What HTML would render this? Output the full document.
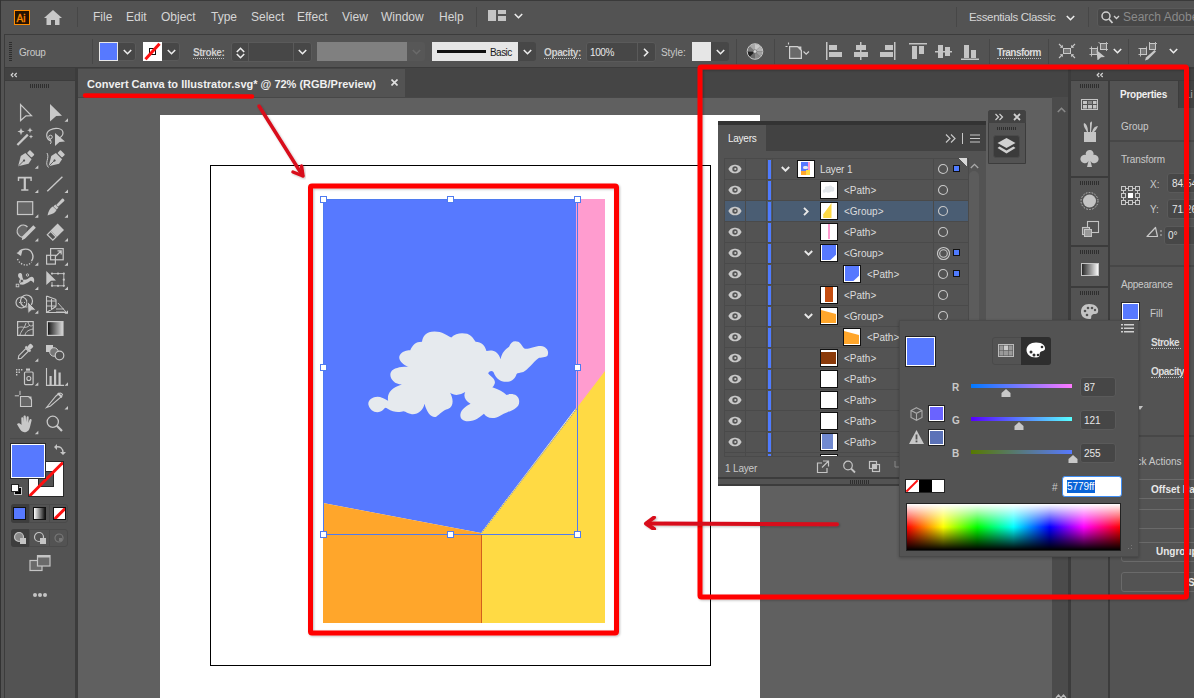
<!DOCTYPE html>
<html><head><meta charset="utf-8">
<style>
*{box-sizing:border-box}
html,body{margin:0;padding:0}
body{width:1194px;height:698px;position:relative;overflow:hidden;background:#535353;font-family:"Liberation Sans",sans-serif;color:#d6d6d6;font-size:12px}
.a{position:absolute}
.t{position:absolute;white-space:nowrap;line-height:1}
.sep{position:absolute;width:1px;background:#444}
.chev{position:absolute;width:6px;height:6px;border-right:2px solid #ececec;border-bottom:2px solid #ececec;transform:rotate(45deg)}
</style></head><body>

<!-- ============ MENU BAR ============ -->
<div class="a" style="left:0;top:0;width:1194px;height:34px;background:#535353"></div>
<div class="a" style="left:0;top:0;width:1194px;height:1px;background:#3a3a3a"></div>
<div class="a" style="left:14px;top:10px;width:16px;height:15px;background:#261300;border:1px solid #ff8c00"></div>
<div class="t" style="left:16.5px;top:13.5px;font-size:10px;color:#ff8c00;-webkit-text-stroke:0.3px #ff8c00">Ai</div>
<svg class="a" style="left:44px;top:10px" width="18" height="15" viewBox="0 0 18 15"><path d="M9 0 L18 8 L15.5 8 L15.5 15 L11 15 L11 10 L7 10 L7 15 L2.5 15 L2.5 8 L0 8 Z" fill="#c8c8c8"/></svg>
<div class="sep" style="left:77px;top:7px;height:20px;background:#474747"></div>
<div class="t" style="left:93px;top:11px">File</div>
<div class="t" style="left:126px;top:11px">Edit</div>
<div class="t" style="left:161px;top:11px">Object</div>
<div class="t" style="left:211px;top:11px">Type</div>
<div class="t" style="left:251px;top:11px">Select</div>
<div class="t" style="left:297px;top:11px">Effect</div>
<div class="t" style="left:342px;top:11px">View</div>
<div class="t" style="left:381px;top:11px">Window</div>
<div class="t" style="left:439px;top:11px">Help</div>


<div class="a" style="left:940px;top:0;width:1px;height:1px"></div>
<div class="sep" style="left:476px;top:7px;height:20px;background:#474747"></div>
<svg class="a" style="left:488px;top:10px" width="18" height="11" viewBox="0 0 18 11"><rect x="0" y="0" width="8" height="11" fill="#c4c4c4"/><rect x="10" y="0" width="8" height="4" fill="#c4c4c4"/><rect x="10" y="6" width="8" height="5" fill="#c4c4c4"/></svg>
<svg class="a" style="left:513.5px;top:13.0px" width="9" height="6" viewBox="0 0 9 6"><path d="M0.8 1 L4.5 4.7 L8.2 1" fill="none" stroke="#ececec" stroke-width="1.6"/></svg>
<div class="sep" style="left:956px;top:7px;height:20px;background:#474747"></div>
<div class="t" style="left:969px;top:12px;font-size:11.5px;letter-spacing:-0.35px">Essentials Classic</div>
<svg class="a" style="left:1065.5px;top:15.0px" width="9" height="6" viewBox="0 0 9 6"><path d="M0.8 1 L4.5 4.7 L8.2 1" fill="none" stroke="#ececec" stroke-width="1.6"/></svg>
<div class="sep" style="left:1088px;top:7px;height:20px;background:#474747"></div>
<div class="a" style="left:1097px;top:8px;width:110px;height:19px;background:#474747;border:1px solid #5a5a5a;border-radius:3px"></div>
<svg class="a" style="left:1101px;top:11px" width="20" height="13" viewBox="0 0 20 13"><circle cx="5" cy="5" r="4" fill="none" stroke="#d0d0d0" stroke-width="1.5"/><path d="M8 8 L11.5 12" stroke="#d0d0d0" stroke-width="1.8"/><path d="M13 5 L15.5 7.5 L18 5" fill="none" stroke="#d0d0d0" stroke-width="1.3"/></svg>
<div class="t" style="left:1123px;top:11px;color:#8a8a8a;font-size:12px">Search Adobe</div>

<!-- ============ CONTROL BAR ============ -->
<div class="a" style="left:4px;top:34px;width:1190px;height:34px;background:#3c3c3c"></div>
<div class="a" style="left:5px;top:35px;width:1189px;height:32px;background:#535353"></div>
<div class="a" style="left:9px;top:42px;width:3px;height:19px;background:repeating-linear-gradient(#2e2e2e 0 1px,transparent 1px 2px)"></div>
<div class="t" style="left:19px;top:47.5px;font-size:10px;font-weight:normal;color:#c9c9c9;letter-spacing:-0.22px">Group</div>
<div class="sep" style="left:92px;top:39px;height:25px;background:#474747"></div>
<!-- fill -->
<div class="a" style="left:99px;top:42px;width:37px;height:19px;background:#474747;border:1px solid #5a5a5a;border-radius:3px"></div>
<div class="a" style="left:99px;top:42px;width:19px;height:19px;background:#5779ff;border:1px solid #e8e8e8"></div>
<svg class="a" style="left:122.5px;top:49.0px" width="9" height="6" viewBox="0 0 9 6"><path d="M0.8 1 L4.5 4.7 L8.2 1" fill="none" stroke="#ececec" stroke-width="1.6"/></svg>
<!-- stroke none -->
<div class="a" style="left:143px;top:42px;width:37px;height:19px;background:#474747;border:1px solid #5a5a5a;border-radius:3px"></div>
<div class="a" style="left:143px;top:42px;width:19px;height:19px;background:#fff;overflow:hidden"><div class="a" style="left:6px;top:6px;width:7px;height:7px;border:1.3px solid #111"></div><div class="a" style="left:-1px;top:8px;width:21px;height:3px;background:#ff1010;transform:rotate(-48deg)"></div></div>
<svg class="a" style="left:166.5px;top:49.0px" width="9" height="6" viewBox="0 0 9 6"><path d="M0.8 1 L4.5 4.7 L8.2 1" fill="none" stroke="#ececec" stroke-width="1.6"/></svg>
<div class="t" style="left:193px;top:47.5px;font-size:10px;font-weight:bold;color:#cfcfcf;letter-spacing:-0.44px">Stroke:</div>
<div class="a" style="left:193px;top:58px;width:31px;height:1px;border-bottom:1px dotted #bbb"></div>
<div class="a" style="left:231px;top:42px;width:81px;height:20px;background:#474747;border:1px solid #5a5a5a;border-radius:3px"></div>
<div class="a" style="left:248px;top:43px;width:1px;height:18px;background:#5a5a5a"></div>
<div class="a" style="left:293px;top:43px;width:1px;height:18px;background:#5a5a5a"></div>
<svg class="a" style="left:235.5px;top:47.0px" width="9" height="6" viewBox="0 0 9 6"><path d="M0.8 5 L4.5 1.3 L8.2 5" fill="none" stroke="#ececec" stroke-width="1.6"/></svg>
<svg class="a" style="left:235.5px;top:53.0px" width="9" height="6" viewBox="0 0 9 6"><path d="M0.8 1 L4.5 4.7 L8.2 1" fill="none" stroke="#ececec" stroke-width="1.6"/></svg>
<svg class="a" style="left:297.5px;top:49.0px" width="9" height="6" viewBox="0 0 9 6"><path d="M0.8 1 L4.5 4.7 L8.2 1" fill="none" stroke="#ececec" stroke-width="1.6"/></svg>
<div class="a" style="left:317px;top:42px;width:90px;height:19px;background:#808080"></div>
<div class="a" style="left:407px;top:42px;width:18px;height:19px;background:#575757;border-radius:0 3px 3px 0"></div>
<svg class="a" style="left:411.5px;top:49.0px" width="9" height="6" viewBox="0 0 9 6"><path d="M0.8 1 L4.5 4.7 L8.2 1" fill="none" stroke="#6a6a6a" stroke-width="1.6"/></svg>
<!-- basic -->
<div class="a" style="left:432px;top:42px;width:104px;height:19px;background:#474747;border-radius:3px"></div>
<div class="a" style="left:432px;top:42px;width:86px;height:19px;background:#e6e6e6"></div>
<div class="a" style="left:437px;top:50px;width:49px;height:3px;background:#111"></div>
<div class="t" style="left:490px;top:47.5px;font-size:10px;font-weight:normal;color:#1a1a1a;letter-spacing:-0.55px">Basic</div>
<svg class="a" style="left:522.5px;top:49.0px" width="9" height="6" viewBox="0 0 9 6"><path d="M0.8 1 L4.5 4.7 L8.2 1" fill="none" stroke="#ececec" stroke-width="1.6"/></svg>
<div class="t" style="left:544px;top:47.5px;font-size:10px;font-weight:bold;color:#cfcfcf;letter-spacing:-0.38px">Opacity:</div>
<div class="a" style="left:544px;top:58px;width:37px;height:1px;border-bottom:1px dotted #bbb"></div>
<div class="a" style="left:586px;top:42px;width:70px;height:20px;background:#474747;border:1px solid #5a5a5a;border-radius:3px"></div>
<div class="a" style="left:637px;top:43px;width:1px;height:18px;background:#5a5a5a"></div>
<div class="t" style="left:590px;top:47.5px;font-size:10px;font-weight:normal;color:#e8e8e8;letter-spacing:-0.39px">100%</div>
<svg class="a" style="left:642.5px;top:47.5px" width="6" height="9" viewBox="0 0 6 9"><path d="M1 0.8 L4.7 4.5 L1 8.2" fill="none" stroke="#ececec" stroke-width="1.6"/></svg>
<div class="t" style="left:661px;top:47.5px;font-size:10px;font-weight:normal;color:#c9c9c9;letter-spacing:-0.07px">Style:</div>
<div class="a" style="left:692px;top:42px;width:37px;height:19px;background:#474747;border-radius:3px"></div>
<div class="a" style="left:692px;top:42px;width:19px;height:19px;background:#e6e6e6"></div>
<svg class="a" style="left:715.5px;top:49.0px" width="9" height="6" viewBox="0 0 9 6"><path d="M0.8 1 L4.5 4.7 L8.2 1" fill="none" stroke="#ececec" stroke-width="1.6"/></svg>
<div class="sep" style="left:736px;top:39px;height:25px;background:#474747"></div>
<svg class="a" style="left:746px;top:43px" width="18" height="17" viewBox="0 0 18 17"><g transform="translate(9 8.5)">
<path d="M0 0 L0 -7.5 A7.5 7.5 0 0 1 5.3 -5.3Z" fill="#c8c8c8"/><path d="M0 0 L5.3 -5.3 A7.5 7.5 0 0 1 7.5 0Z" fill="#b4b4b4"/><path d="M0 0 L7.5 0 A7.5 7.5 0 0 1 5.3 5.3Z" fill="#a0a0a0"/><path d="M0 0 L5.3 5.3 A7.5 7.5 0 0 1 0 7.5Z" fill="#8a8a8a"/><path d="M0 0 L0 7.5 A7.5 7.5 0 0 1 -5.3 5.3Z" fill="#6a6a6a"/><path d="M0 0 L-5.3 5.3 A7.5 7.5 0 0 1 -7.5 0Z" fill="#222"/><path d="M0 0 L-7.5 0 A7.5 7.5 0 0 1 -5.3 -5.3Z" fill="#7a7a7a"/><path d="M0 0 L-5.3 -5.3 A7.5 7.5 0 0 1 0 -7.5Z" fill="#a8a8a8"/>
<circle r="7.8" fill="none" stroke="#c8c8c8" stroke-width="1"/><circle r="1.8" fill="#d8d8d8" stroke="#666" stroke-width="0.6"/></g></svg>
<div class="sep" style="left:774px;top:39px;height:25px;background:#474747"></div>
<svg class="a" style="left:785px;top:42px" width="27" height="18" viewBox="0 0 27 18"><path d="M4.6 4.6 H12.5 L16.4 8.5 V16.4 H4.6 Z" fill="#6a6a6a" stroke="#d0d0d0" stroke-width="1.2"/><path d="M12.5 4.6 L16.4 4.6 V8.5Z" fill="#d0d0d0"/><path d="M0.5 4.5 H2.6 M3.5 0.5 V2.6" stroke="#d0d0d0" stroke-width="1.1"/><path d="M18.5 9.5 L21.2 12.2 L23.9 9.5" fill="none" stroke="#d0d0d0" stroke-width="1.2"/></svg>
<svg class="a" style="left:826px;top:42px" width="70" height="18" viewBox="0 0 70 18"><g fill="#c4c4c4"><rect x="0" y="0" width="1.5" height="18"/><rect x="3" y="3" width="8" height="5"/><rect x="3" y="10" width="13" height="5"/>
<rect x="34" y="0" width="1.5" height="18"/><rect x="30" y="3" width="10" height="5"/><rect x="28" y="10" width="14" height="5"/>
<rect x="68" y="0" width="1.5" height="18"/><rect x="59" y="3" width="8" height="5"/><rect x="54" y="10" width="13" height="5"/></g></svg>
<svg class="a" style="left:909px;top:43px" width="72" height="17" viewBox="0 0 72 17"><g fill="#c4c4c4"><rect x="0" y="0" width="18" height="1.5"/><rect x="3" y="3" width="5" height="13"/><rect x="10" y="3" width="5" height="8"/>
<rect x="26" y="8" width="17" height="1.5"/><rect x="29" y="2" width="5" height="13"/><rect x="36" y="4" width="5" height="9"/>
<rect x="52" y="15.5" width="18" height="1.5"/><rect x="55" y="2" width="5" height="13"/><rect x="62" y="7" width="5" height="8"/></g></svg>
<div class="sep" style="left:989px;top:39px;height:25px;background:#474747"></div>
<div class="t" style="left:997px;top:47.5px;font-size:10px;font-weight:bold;color:#dcdcdc;letter-spacing:-0.55px">Transform</div>
<div class="a" style="left:997px;top:58px;width:44px;height:1px;border-bottom:1px dotted #bbb"></div>
<div class="sep" style="left:1048px;top:39px;height:25px;background:#474747"></div>
<svg class="a" style="left:1058px;top:43px" width="18" height="16" viewBox="0 0 18 16"><rect x="5.5" y="5.5" width="7" height="5" fill="#777" stroke="#c8c8c8" stroke-width="1"/><g stroke="#c8c8c8" stroke-width="1.1" fill="none"><path d="M1 1 L4.5 4.5 M17 1 L13.5 4.5 M1 15 L4.5 11.5 M17 15 L13.5 11.5"/></g><g fill="#c8c8c8"><path d="M4.8 4.8 L1.8 4.8 L4.8 1.8Z M13.2 4.8 L16.2 4.8 L13.2 1.8Z M4.8 11.2 L1.8 11.2 L4.8 14.2Z M13.2 11.2 L16.2 11.2 L13.2 14.2Z"/></g></svg>
<svg class="a" style="left:1089px;top:42px" width="20" height="18" viewBox="0 0 20 18"><g fill="#777" stroke="#c8c8c8" stroke-width="1"><rect x="2.5" y="6.5" width="6" height="6"/><rect x="11.5" y="1.5" width="6" height="6"/></g><g stroke="#c8c8c8" stroke-width="0.9"><path d="M0.5 6.5 H2.5 M2.5 4.5 V6.5 M0.5 12.5 H2.5 M2.5 12.5 V14.5 M8.5 4.5 V6.5 M9.5 0.5 L11.5 1.5 M17.5 0 V1.5 H19 M17.5 7.5 H19 M17.5 7.5 V9"/></g><path d="M7.5 8 L16 15 L12 15.2 L8.5 18.5 Z" fill="#c8c8c8"/></svg>
<svg class="a" style="left:1112.5px;top:48.0px" width="9" height="6" viewBox="0 0 9 6"><path d="M0.8 1 L4.5 4.7 L8.2 1" fill="none" stroke="#ececec" stroke-width="1.6"/></svg>
<div class="sep" style="left:1128px;top:39px;height:25px;background:#474747"></div>
<svg class="a" style="left:1138px;top:42px" width="20" height="20" viewBox="0 0 20 20"><g fill="#777" stroke="#c8c8c8" stroke-width="1"><rect x="2.5" y="6.5" width="6" height="6"/><rect x="11.5" y="1.5" width="6" height="6"/></g><g stroke="#c8c8c8" stroke-width="0.9"><path d="M0.5 6.5 H2.5 M0.5 12.5 H2.5 M2.5 12.5 V14.5 M8.5 4.5 V6.5 M11.5 0 V1.5 M17.5 0 V1.5 H19"/></g><path d="M16.5 8 L18 9.5 L10 17.5 L7 18.5 L8 15.5 Z" fill="#c8c8c8"/></svg>
<svg class="a" style="left:1168.5px;top:48.0px" width="9" height="6" viewBox="0 0 9 6"><path d="M0.8 1 L4.5 4.7 L8.2 1" fill="none" stroke="#ececec" stroke-width="1.6"/></svg>


<!-- ============ LEFT WINDOW EDGE / TOOLBAR ============ -->
<div class="a" style="left:4px;top:68px;width:74px;height:630px;background:#3c3c3c"></div>
<div class="a" style="left:0;top:0;width:1px;height:698px;background:#333"></div>
<div class="a" style="left:5px;top:68px;width:70px;height:12px;background:#424242"></div>
<div class="a" style="left:5px;top:81px;width:70px;height:617px;background:#535353"></div>
<svg class="a" style="left:10px;top:72px" width="8" height="6" viewBox="0 0 8 6"><path d="M3.2 1 L1.2 3 L3.2 5 M6.7 1 L4.7 3 L6.7 5" fill="none" stroke="#d8d8d8" stroke-width="1.2"/></svg>
<div class="a" style="left:30px;top:84px;width:20px;height:4px;background:repeating-linear-gradient(90deg,#2e2e2e 0 1px,transparent 1px 2px)"></div>
<svg class="a" style="left:0;top:90px" width="78" height="360" viewBox="0 90 78 360">
<g fill="#c8c8c8" stroke="none">
 <!-- selection -->
 <path d="M20.6 104.6 L31.4 115.6 L26 115.8 L20.6 120.6 Z" fill="none" stroke="#c8c8c8" stroke-width="1.3" stroke-linejoin="miter"/>
 <path d="M50 104 L62 115.8 L56.2 116 L50 121.5 Z"/>
 <path d="M64.5 121.7 L68.0 118.2 V121.7Z"/>
 <!-- wand -->
 <path d="M16.6 144.2 L27 133.8 L28.6 135.4 L18.2 145.8 Z"/>
 <path d="M21 128 l1 2.6 l2.6 1 l-2.6 1 l-1 2.6 l-1 -2.6 l-2.6 -1 l2.6 -1z"/>
 <path d="M30 127.5 l0.8 2 l2 0.8 l-2 0.8 l-0.8 2 l-0.8 -2 l-2 -0.8 l2 -0.8z"/>
 <path d="M31 134.5 l0.6 1.5 l1.5 0.6 l-1.5 0.6 l-0.6 1.5 l-0.6 -1.5 l-1.5 -0.6 l1.5 -0.6z"/>
 <!-- lasso -->
 <path d="M51 141 C46 139 45 133 50 130 C55 127 63 128 63 133 C63 136 60 138 58 138" fill="none" stroke="#c8c8c8" stroke-width="1.2"/>
 <circle cx="50.5" cy="137" r="1.8" fill="none" stroke="#c8c8c8" stroke-width="1"/>
 <path d="M50 139 C51 141 52 143 50 144" fill="none" stroke="#c8c8c8" stroke-width="1"/>
 <path d="M55 133 L65 141.5 L59.5 142 L55 146 Z"/>
 <!-- pen -->
 <g transform="translate(25 159.5) rotate(45) scale(1.02)">
  <rect x="-3.2" y="-10" width="6.4" height="4.2" rx="0.8"/>
  <path d="M-4.3 -4.8 H4.3 L5.4 0.5 L0 9.5 L-5.4 0.5 Z"/>
  <circle cx="0" cy="1.3" r="1.1" fill="#535353"/><path d="M0 2 V9" stroke="#535353" stroke-width="0.8"/>
 </g>
 <path d="M34.8 168.8 L38.3 165.3 V168.8Z"/>
 <g transform="translate(55.5 159.5) rotate(45) scale(1.02)">
  <rect x="-3.2" y="-10" width="6.4" height="4.2" rx="0.8"/>
  <path d="M-4.3 -4.8 H4.3 L5.4 0.5 L0 9.5 L-5.4 0.5 Z"/>
  <circle cx="0" cy="1.3" r="1.1" fill="#535353"/><path d="M0 2 V9" stroke="#535353" stroke-width="0.8"/>
 </g>
 <path d="M48.5 167.5 C44 163 50 158 47 153" fill="none" stroke="#c8c8c8" stroke-width="1"/>
 <!-- type -->
 <path d="M17.8 176.8 H31.8 V181 H30.4 V178.6 H25.9 V189.2 H28.4 V190.8 H21.2 V189.2 H23.7 V178.6 H19.2 V181 H17.8 Z"/>
 <path d="M34.8 193 L38.3 189.5 V193Z"/>
 <path d="M47.3 191.2 L62.4 176.8" stroke="#c8c8c8" stroke-width="1.4"/>
 <path d="M64.5 193 L68.0 189.5 V193Z"/>
 <!-- rect -->
 <rect x="17.5" y="201.7" width="15.2" height="12.8" fill="#666" stroke="#c8c8c8" stroke-width="1.2"/>
 <path d="M34.8 217.7 L38.3 214.2 V217.7Z"/>
 <g transform="translate(55 208) rotate(45)"><path d="M-1.6 -11.5 C-1.6 -12.8 1.6 -12.8 1.6 -11.5 L1.3 -3 H-1.3Z"/><rect x="-2.2" y="-2.6" width="4.4" height="2.6"/><path d="M-2.6 0.4 H2.6 C3.4 3 3 6 0 10.5 C-3 6 -3.4 3 -2.6 0.4Z"/></g>
 <path d="M64.5 217.7 L68.0 214.2 V217.7Z"/>
 <!-- shaper / eraser -->
 <path d="M26 236.5 A6 6 0 1 1 27.5 227" fill="#666" stroke="#c8c8c8" stroke-width="1.3"/>
 <path d="M21.8 240.2 L22.4 236.2 L33.3 225.3 L35.8 227.8 L24.9 238.7 Z"/>
 <path d="M34.8 241.6 L38.3 238.1 V241.6Z"/>
 <g transform="translate(55.5 232) rotate(45)">
  <rect x="-4.5" y="-7.5" width="9" height="10"/>
  <rect x="-3.9" y="3.1" width="7.8" height="4.6" fill="none" stroke="#c8c8c8" stroke-width="1.2"/>
 </g>
 <path d="M64.5 241.6 L68.0 238.1 V241.6Z"/>
 <!-- rotate / scale -->
 <path d="M19 252 C22 248 30 248 32 253 C33.5 256 33 259 31.5 261" fill="none" stroke="#c8c8c8" stroke-width="1.4"/>
 <path d="M16.5 253 L22.5 250 L21 256Z"/>
 <path d="M17.5 259 C19 263 23 265 26 265 C28 265 30 264 31.5 262" fill="none" stroke="#c8c8c8" stroke-width="1.3" stroke-dasharray="1.3 1.5"/>
 <path d="M34.8 265.8 L38.3 262.3 V265.8Z"/>
 <rect x="46.6" y="255.3" width="8.8" height="8.8" fill="none" stroke="#c8c8c8" stroke-width="1.2"/>
 <rect x="50.6" y="248.6" width="12.6" height="11.2" fill="none" stroke="#c8c8c8" stroke-width="1.2"/>
 <path d="M56 256 L61 251 M57.5 250.8 H61.2 V254.5" fill="none" stroke="#c8c8c8" stroke-width="1.2"/>
 <path d="M64.5 265.8 L68.0 262.3 V265.8Z"/>
 <!-- warp / free transform -->
 <path d="M18.2 276.5 C17.5 273.5 19.5 272.5 21.2 273.2 C22.8 274.2 21.8 276.8 23 278.8 C24.8 281 28 278.8 30 277.2 C32.2 275.8 34.2 277.2 34.2 280 C34.2 281.8 33.6 283 33.4 283 C32.6 281.4 31.4 280.2 29.8 281.2 C27.2 283 24.2 285 21 284.6 C18.8 284.2 18.8 281.4 19.8 279.4 C20.2 278.2 18.4 277.6 18.2 276.5Z"/>
 <path d="M17.5 285.5 L27.3 275.2" stroke="#535353" stroke-width="0.9"/>
 <circle cx="21.8" cy="281" r="1.7" fill="#535353" stroke="#c8c8c8" stroke-width="0.8"/>
 <rect x="16.2" y="284.2" width="2.6" height="2.6" fill="#535353" stroke="#c8c8c8" stroke-width="0.9"/>
 <circle cx="27.5" cy="275" r="1.2" fill="#535353" stroke="#c8c8c8" stroke-width="0.9"/>
 <path d="M34.8 290 L38.3 286.5 V290Z"/>
 <path d="M46.3 271 L56 280.5 L51 280.7 L46.3 285Z"/>
 <path d="M52 273.6 H63.8 V285.8 H52 V282" fill="none" stroke="#c8c8c8" stroke-width="0.9"/>
 <g><circle cx="52" cy="273.6" r="1.1"/><circle cx="58" cy="273.6" r="1.1"/><circle cx="63.8" cy="273.6" r="1.1"/><circle cx="63.8" cy="279.7" r="1.1"/><circle cx="63.8" cy="285.8" r="1.1"/><circle cx="58" cy="285.8" r="1.1"/><circle cx="52" cy="285.8" r="1.1"/></g>
 <path d="M64.5 290 L68 286.5 V290Z"/>
 <!-- shape builder / perspective -->
 <circle cx="21.5" cy="302.5" r="5.5" fill="none" stroke="#c8c8c8" stroke-width="1.2"/>
 <circle cx="26.5" cy="301" r="6" fill="none" stroke="#c8c8c8" stroke-width="1.2"/>
 <path d="M19 302.5 h1 M21.5 302.5 h1 M24 302.5 h1" stroke="#c8c8c8" stroke-width="1.2"/>
 <path d="M27.5 301.5 L36 310 L31.5 310.3 L28 313.5Z" stroke="#535353" stroke-width="0.8"/>
 <path d="M34.8 313.8 L38.3 310.3 V313.8Z"/>
 <path d="M46.5 296 V312.5 H66 M46.5 296 L56 299.5 M46.5 312.5 L56 306.5 M51.5 297.8 V310 M56 299.5 V306.5 M46.5 301 H56 M46.5 306 H56" fill="none" stroke="#c8c8c8" stroke-width="1.1"/>
 <path d="M58 303 L66 312 H56" fill="none" stroke="#c8c8c8" stroke-width="0.9"/><path d="M56 309 H64" stroke="#c8c8c8" stroke-width="0.9"/>
 <path d="M64.5 313.8 L68.0 310.3 V313.8Z"/>
 <!-- mesh / gradient -->
 <rect x="17.6" y="321.6" width="15.6" height="13.8" fill="none" stroke="#c8c8c8" stroke-width="1.2"/>
 <path d="M18 328 C22 325 25 330 30 325 M20 335 C21 331 24 329 26 323 M25 335 C26 331 29 330 33 329 M28 322 C29 326 31 327 33 325" fill="none" stroke="#c8c8c8" stroke-width="0.9"/>
 <defs><linearGradient id="gtb" x1="0" x2="1"><stop offset="0" stop-color="#111"/><stop offset="1" stop-color="#ddd"/></linearGradient></defs>
 <rect x="47.4" y="321.6" width="15.6" height="13.8" fill="url(#gtb)" stroke="#c8c8c8" stroke-width="1.2"/>
 <!-- eyedropper / blend -->
 <g transform="translate(25 352) rotate(45)">
  <rect x="-2.2" y="-10" width="4.4" height="5" rx="1"/>
  <rect x="-3.5" y="-5.2" width="7" height="2"/>
  <path d="M-1.8 -3 H1.8 V7 L0 9.5 L-1.8 7Z" fill="none" stroke="#c8c8c8" stroke-width="1.1"/>
 </g>
 <path d="M34.8 361.8 L38.3 358.3 V361.8Z"/>
 <rect x="46" y="345" width="7" height="7"/>
 <circle cx="54" cy="352" r="4.3" fill="#777" stroke="#c8c8c8" stroke-width="1"/>
 <circle cx="59.5" cy="355.5" r="4.3" fill="#535353" stroke="#c8c8c8" stroke-width="1.2"/>
 <!-- symbol sprayer / graph -->
 <path d="M16 369 h1.4 v1.4 h-1.4z M18.5 369 h1.4 v1.4 h-1.4z M21 369 h1.4 v1.4 h-1.4z M16 371.5 h1.4 v1.4 h-1.4z M18.5 371.5 h1.4 v1.4 h-1.4z M16 374 h1.4 v1.4 h-1.4z"/>
 <rect x="26" y="368.5" width="4" height="2.2"/>
 <rect x="24.5" y="372" width="8.6" height="12.6" rx="1" fill="none" stroke="#c8c8c8" stroke-width="1.2"/>
 <circle cx="28.8" cy="378.5" r="2" fill="none" stroke="#c8c8c8" stroke-width="1.1"/>
 <path d="M34.8 385.8 L38.3 382.3 V385.8Z"/>
 <path d="M46.5 368 V385.4 H64" fill="none" stroke="#c8c8c8" stroke-width="1.1"/>
 <rect x="49.5" y="376" width="2.2" height="9"/><rect x="54" y="369.5" width="2.2" height="15.5"/><rect x="58.5" y="372.5" width="2.2" height="12.5"/>
 <path d="M64.5 385.8 L68.0 382.3 V385.8Z"/>
 <!-- artboard / slice -->
 <path d="M20.5 396.5 H28.5 L31.5 399.5 V406.5 H20.5 Z" fill="#666" stroke="#c8c8c8" stroke-width="1.1"/>
 <path d="M28.5 396.5 H31.5 V399.5Z"/>
 <path d="M14.8 395.8 H19 M20 390.8 V395" stroke="#c8c8c8" stroke-width="1"/>
 <path d="M46.5 407.5 L56 396 L59 393.5 C60 392.5 62 393.5 62.5 394.5 L61 397 L50.5 406 Z" fill="none" stroke="#c8c8c8" stroke-width="1.1"/>
 <path d="M58.5 392.5 L62.5 396.5 L61.5 398 L57 394Z"/>
 <path d="M64.5 409.5 L68.0 406.0 V409.5Z"/>
 <!-- hand / zoom -->
 <path d="M17 424.2 C18 422.5 20 423 21.5 425 L21.3 418.5 C21.2 416.8 23.2 416.8 23.3 418.3 L23.8 422 L23.5 416.6 C23.5 415 25.8 415 25.8 416.6 L26.2 422 L26.6 417.3 C26.8 415.8 28.8 416 28.7 417.6 L28.4 423 L29.5 419.8 C30 418.5 32 419 31.6 420.5 L30 427 C29 431 27 432.2 24.5 432.2 C22 432.2 20.5 430 19.5 428.5Z"/>
 <path d="M34.8 434.2 L38.3 430.7 V434.2Z"/>
 <circle cx="52.8" cy="421.8" r="5.6" fill="none" stroke="#c8c8c8" stroke-width="1.3"/>
 <path d="M56.8 425.8 L62 431" stroke="#c8c8c8" stroke-width="2.2"/>
</g>
</svg>
<div class="a" style="left:10px;top:438px;width:60px;height:1px;background:#4a4a4a"></div>
<!-- fill/stroke -->
<div class="a" style="left:28px;top:461px;width:36px;height:36px;background:#fff;border:1px solid #2a2a2a;overflow:hidden">
 <div class="a" style="left:9px;top:9px;width:16px;height:16px;background:#535353;border:1px solid #2a2a2a"></div>
 <div class="a" style="left:-7px;top:16px;width:48px;height:3px;background:#ff1010;transform:rotate(-45deg)"></div>
</div>
<div class="a" style="left:11px;top:444px;width:34px;height:34px;background:#5779ff;border:1px solid #fff;outline:1px solid #2a2a2a"></div>
<svg class="a" style="left:54px;top:443px" width="13" height="13" viewBox="0 0 13 13"><path d="M2 4 C6 3 9 5 9 10" fill="none" stroke="#c4c4c4" stroke-width="1.4"/><path d="M0 4 L3 1 L3 7Z M6 9 L12 9 L9 12Z" fill="#c4c4c4"/></svg>
<div class="a" style="left:14px;top:487px;width:8px;height:8px;background:#000;border:1px solid #c4c4c4"></div>
<div class="a" style="left:11px;top:484px;width:8px;height:8px;background:#fff;border:1px solid #222"></div>
<!-- mode buttons -->
<div class="a" style="left:11px;top:504px;width:57px;height:19px;border:1px solid #4a4a4a;border-radius:3px"></div>
<div class="a" style="left:11px;top:504px;width:18px;height:19px;background:#3d3d3d;border-radius:3px 0 0 3px"></div>
<div class="a" style="left:13px;top:507px;width:13px;height:13px;background:#5779ff;border:1px solid #111"></div>
<div class="a" style="left:29px;top:505px;width:1px;height:17px;background:#4a4a4a"></div><div class="a" style="left:49px;top:505px;width:1px;height:17px;background:#4a4a4a"></div><div class="a" style="left:29px;top:530px;width:1px;height:16px;background:#4a4a4a"></div><div class="a" style="left:49px;top:530px;width:1px;height:16px;background:#4a4a4a"></div>
<div class="a" style="left:33px;top:507px;width:13px;height:13px;background:linear-gradient(90deg,#fff,#111);border:1px solid #111"></div>
<div class="a" style="left:53px;top:507px;width:13px;height:13px;background:#fff;border:1px solid #111;overflow:hidden"><div class="a" style="left:-3px;top:4px;width:18px;height:2.5px;background:#ff1010;transform:rotate(-45deg)"></div></div>
<div class="a" style="left:11px;top:529px;width:57px;height:18px;border:1px solid #4a4a4a;border-radius:3px"></div>
<div class="a" style="left:11px;top:529px;width:18px;height:18px;background:#3d3d3d;border-radius:3px 0 0 3px"></div>
<svg class="a" style="left:13px;top:531px" width="55" height="15" viewBox="0 0 55 15"><circle cx="6" cy="6" r="4.5" fill="#888" stroke="#c4c4c4" stroke-width="1.2"/><rect x="7" y="7" width="6" height="6" fill="#c4c4c4"/><circle cx="26" cy="6" r="4.5" fill="none" stroke="#c4c4c4" stroke-width="1.2"/><rect x="27" y="7" width="6" height="6" fill="#c4c4c4"/><circle cx="46" cy="7" r="4" fill="none" stroke="#777" stroke-width="1.2"/><path d="M46 7 h3 v3 h-3z" fill="#777"/></svg>
<svg class="a" style="left:29px;top:555px" width="22" height="17" viewBox="0 0 22 17"><rect x="1" y="5.5" width="12" height="10" fill="#6a6a6a" stroke="#c4c4c4" stroke-width="1.2"/><rect x="8.5" y="0.5" width="12.5" height="10.5" fill="#6a6a6a" stroke="#c4c4c4" stroke-width="1.2"/><rect x="8.5" y="0.5" width="12.5" height="2" fill="#c4c4c4"/></svg>
<div class="a" style="left:33px;top:593px;width:4px;height:4px;border-radius:2px;background:#c4c4c4"></div>
<div class="a" style="left:38px;top:593px;width:4px;height:4px;border-radius:2px;background:#c4c4c4"></div>
<div class="a" style="left:43px;top:593px;width:4px;height:4px;border-radius:2px;background:#c4c4c4"></div>

<!-- ============ TAB STRIP & CANVAS ============ -->
<div class="a" style="left:78px;top:68px;width:992px;height:30px;background:#454545"></div>
<div class="a" style="left:78px;top:69px;width:327px;height:28px;background:#535353"></div>
<div class="t" style="left:87px;top:79px;font-size:11px;font-weight:bold;color:#f0f0f0">Convert Canva to Illustrator.svg* @ 72% (RGB/Preview)</div>
<svg class="a" style="left:391px;top:79px" width="7" height="7" viewBox="0 0 7 7"><path d="M0.5 0.5 L6.5 6.5 M6.5 0.5 L0.5 6.5" stroke="#e0e0e0" stroke-width="1.6"/></svg>
<div class="a" style="left:78px;top:97px;width:974px;height:601px;background:#606060"></div>
<div class="a" style="left:1052px;top:97px;width:16px;height:601px;background:#4b4b4b"></div>
<div class="a" style="left:78px;top:97px;width:974px;height:1px;background:#474747"></div>
<svg class="a" style="left:1057.0px;top:106.5px" width="9" height="6" viewBox="0 0 9 6"><path d="M0.8 5 L4.5 1.3 L8.2 5" fill="none" stroke="#8a8a8a" stroke-width="1.6"/></svg>
<div class="a" style="left:1068px;top:68px;width:3px;height:630px;background:#3c3c3c"></div>


<!-- ============ ARTBOARD ============ -->
<div class="a" style="left:160px;top:115px;width:600px;height:583px;background:#fff"></div>
<div class="a" style="left:210px;top:165px;width:501px;height:501px;border:1px solid #000"></div>
<svg class="a" style="left:0;top:0" width="1194" height="698" viewBox="0 0 1194 698">
 <rect x="575" y="199" width="30" height="215" fill="#ff9ccf"/>
 <path d="M323 199 H576 V408 L481 533 L323 503 Z" fill="#5779ff"/>
 <path d="M605 371 L481 533 L481 623 L605 623 Z" fill="#ffda44"/>
 <path d="M323 503 L481 533 L481 623 L323 623 Z" fill="#ffa62b"/>
 <path d="M481.5 534 V623" stroke="#d2601c" stroke-width="1"/>
 <g transform="translate(360 320) scale(0.1675)">
 <path fill="#e6eaee" d="M50 505 C45 470 95 445 135 465 C150 472 160 478 168 482 C160 440 185 405 250 385 C200 385 170 340 185 310 C200 285 250 278 290 280 C240 260 220 225 245 200 C262 182 290 180 300 180 C315 150 330 130 370 130 C375 95 395 68 445 68 C490 68 520 90 545 105 C570 78 605 75 640 82 C665 90 680 115 690 130 C725 132 745 150 755 185 C790 175 825 185 840 235 C845 195 870 175 890 160 C900 130 920 120 945 130 C965 140 970 165 985 172 C1010 175 1040 155 1080 155 C1115 160 1130 185 1120 212 C1110 225 1080 222 1065 228 C1030 255 1000 300 975 310 C955 315 940 315 935 322 C925 355 895 375 860 368 C825 362 810 340 800 318 C795 300 775 298 765 318 C780 340 810 350 805 378 C800 392 795 398 790 402 C830 415 855 430 875 448 C905 435 945 445 950 480 C955 520 920 535 880 550 C850 560 825 585 790 585 C765 585 750 575 740 560 C715 580 690 605 645 605 C610 605 595 585 600 560 C605 535 630 515 660 500 C630 480 615 460 628 430 C610 440 585 452 560 445 C550 442 545 440 538 435 C555 465 565 515 525 532 C495 540 480 560 455 578 C425 585 400 555 385 500 C378 540 345 565 310 562 C285 560 275 548 260 545 C240 550 200 555 165 530 C150 520 150 525 140 535 C110 565 60 550 50 505 Z"/>
 </g>
 <!-- selection bbox -->
 <rect x="323.5" y="199.5" width="254" height="335" fill="none" stroke="#4f7bf0" stroke-width="1"/>
 <path d="M481.5 533 L577 408.5" stroke="#4f7bf0" stroke-width="0.9" stroke-dasharray="1.5 1" opacity="0.8"/>
 <g fill="#fff" stroke="#4f7bf0" stroke-width="1">
  <rect x="320.5" y="196.5" width="6" height="6"/><rect x="447.5" y="196.5" width="6" height="6"/><rect x="574.5" y="196.5" width="6" height="6"/>
  <rect x="320.5" y="364.5" width="6" height="6"/><rect x="574.5" y="364.5" width="6" height="6"/>
  <rect x="320.5" y="531.5" width="6" height="6"/><rect x="447.5" y="531.5" width="6" height="6"/><rect x="574.5" y="531.5" width="6" height="6"/>
 </g>
</svg>



<svg class="a" style="left:1055px;top:693px" width="12" height="5" viewBox="0 0 12 5"><path d="M1 5 L3.5 2 L6 5 M6 5 L8.5 2 L11 5" fill="none" stroke="#bbb" stroke-width="1.3"/></svg>
<!-- ============ RIGHT DOCK ============ -->
<div class="a" style="left:1071px;top:68px;width:123px;height:630px;background:#3c3c3c"></div>
<div class="a" style="left:1071px;top:69px;width:123px;height:11px;background:#424242"></div>
<svg class="a" style="left:1096px;top:72px" width="8" height="6" viewBox="0 0 8 6"><path d="M3.2 1 L1.2 3 L3.2 5 M6.7 1 L4.7 3 L6.7 5" fill="none" stroke="#d8d8d8" stroke-width="1.2"/></svg>
<!-- icon column -->
<div class="a" style="left:1071px;top:81px;width:37px;height:617px;background:#535353"></div>
<div class="a" style="left:1071px;top:176px;width:37px;height:2px;background:#3c3c3c"></div>
<div class="a" style="left:1071px;top:245px;width:37px;height:2px;background:#3c3c3c"></div>
<div class="a" style="left:1071px;top:286px;width:37px;height:2px;background:#3c3c3c"></div>
<div class="a" style="left:1071px;top:327px;width:37px;height:2px;background:#3c3c3c"></div>
<div class="a" style="left:1080px;top:84px;width:19px;height:4px;background:repeating-linear-gradient(90deg,#2e2e2e 0 1px,transparent 1px 2px)"></div>
<div class="a" style="left:1080px;top:181px;width:19px;height:4px;background:repeating-linear-gradient(90deg,#2e2e2e 0 1px,transparent 1px 2px)"></div>
<div class="a" style="left:1080px;top:250px;width:19px;height:4px;background:repeating-linear-gradient(90deg,#2e2e2e 0 1px,transparent 1px 2px)"></div>
<div class="a" style="left:1080px;top:291px;width:19px;height:4px;background:repeating-linear-gradient(90deg,#2e2e2e 0 1px,transparent 1px 2px)"></div>
<svg class="a" style="left:1071px;top:81px" width="37" height="250" viewBox="1071 81 37 250">
 <g fill="#c4c4c4">
  <rect x="1081.5" y="99.5" width="16" height="10" fill="none" stroke="#c4c4c4" stroke-width="1"/>
  <rect x="1083" y="101" width="4" height="3"/><rect x="1088" y="101" width="4" height="3" fill="#888"/><rect x="1093" y="101" width="3.5" height="3"/>
  <rect x="1083" y="105" width="4" height="3.5"/><rect x="1088" y="105" width="4" height="3.5"/><rect x="1093" y="105" width="3.5" height="3.5"/>
  <path d="M1084 132 H1096 V142 H1084 Z"/>
  <path d="M1087 132 C1085 128 1083 126 1084 123 C1087 124 1088 128 1088 132Z M1090 132 L1090 123 C1091 121 1092 121 1092 123 L1091 132Z M1092 132 C1093 128 1095 126 1098 126 C1097 129 1095 131 1093 133Z"/>
  <path d="M1089.5 158 A4 4 0 1 1 1093.5 155 A4 4 0 1 1 1095.5 163 A4 4 0 0 1 1090.5 161 L1092 167 H1087 L1088.5 161 A4 4 0 0 1 1083.5 163 A4 4 0 1 1 1085.5 155 A4 4 0 0 1 1089.5 158Z"/>
  <circle cx="1089.5" cy="201" r="6.5"/>
  <circle cx="1089.5" cy="201" r="8.5" fill="none" stroke="#c4c4c4" stroke-width="0.9" stroke-dasharray="1.6 1.4"/>
  <rect x="1087.5" y="221.5" width="11" height="11" fill="none" stroke="#c4c4c4" stroke-width="1.1"/>
  <rect x="1082.5" y="227.5" width="7" height="7" fill="#777" stroke="#c4c4c4" stroke-width="1.1"/>
  <rect x="1084.5" y="229.5" width="7" height="7" fill="#999" stroke="#c4c4c4" stroke-width="1"/>
 </g>
 <defs><linearGradient id="gic" x1="0" x2="1"><stop offset="0" stop-color="#222"/><stop offset="1" stop-color="#fff"/></linearGradient></defs>
 <rect x="1081.5" y="263.5" width="17" height="12" fill="url(#gic)" stroke="#c4c4c4" stroke-width="1"/>
 <path d="M1089 304 C1097 304 1099 309 1098 312 C1097 315 1094 313 1092 315 C1090 317 1093 319 1089 319 C1083 319 1081 315 1081 312 C1081 307 1084 304 1089 304Z" fill="#c4c4c4"/>
 <g fill="#535353"><circle cx="1085" cy="311" r="1.3"/><circle cx="1087" cy="315" r="1.3"/><circle cx="1088" cy="308" r="1.3"/><circle cx="1092" cy="308" r="1.3"/><circle cx="1095" cy="310" r="1.2"/></g>
</svg>
<!-- properties -->
<div class="a" style="left:1110px;top:81px;width:84px;height:617px;background:#535353"></div>
<div class="a" style="left:1110px;top:81px;width:84px;height:27px;background:#424242"></div>
<div class="a" style="left:1110px;top:81px;width:68px;height:27px;background:#535353"></div>
<div class="a" style="left:1178px;top:81px;width:1px;height:27px;background:#3c3c3c"></div>
<div class="t" style="left:1120px;top:89.5px;font-size:10px;font-weight:bold;color:#f0f0f0;letter-spacing:-0.25px">Properties</div>
<div class="t" style="left:1185px;top:89.5px;font-size:10px;font-weight:normal;color:#aaa;letter-spacing:0px">Li</div>
<div class="t" style="left:1121px;top:121.5px;font-size:10px;font-weight:normal;color:#c9c9c9;letter-spacing:-0.08px">Group</div>
<div class="a" style="left:1110px;top:140px;width:84px;height:2px;background:#474747"></div>
<div class="t" style="left:1121px;top:154.5px;font-size:10px;font-weight:normal;color:#c9c9c9;letter-spacing:-0.13px">Transform</div>
<svg class="a" style="left:1120px;top:185px" width="21" height="21" viewBox="0 0 21 21"><g fill="none" stroke="#c8c8c8" stroke-width="1"><rect x="1.5" y="1.5" width="4" height="4"/><rect x="8.5" y="1.5" width="4" height="4"/><rect x="15.5" y="1.5" width="4" height="4"/><rect x="1.5" y="8.5" width="4" height="4"/><rect x="15.5" y="8.5" width="4" height="4"/><rect x="1.5" y="15.5" width="4" height="4"/><rect x="8.5" y="15.5" width="4" height="4"/><rect x="15.5" y="15.5" width="4" height="4"/><path d="M5.5 3.5 H8.5 M12.5 3.5 H15.5 M5.5 17.5 H8.5 M12.5 17.5 H15.5 M3.5 5.5 V8.5 M3.5 12.5 V15.5 M17.5 5.5 V8.5 M17.5 12.5 V15.5"/></g><rect x="8" y="8" width="5" height="5" fill="#fff"/></svg>
<div class="t" style="left:1150px;top:179.5px;font-size:10px;font-weight:normal;color:#c9c9c9;letter-spacing:0px">X:</div>
<div class="a" style="left:1167px;top:173px;width:40px;height:20px;background:#474747;border:1px solid #5a5a5a;border-radius:3px"></div>
<div class="t" style="left:1172px;top:178.5px;font-size:10px;font-weight:normal;color:#e8e8e8;letter-spacing:0px">84.54</div>
<div class="t" style="left:1150px;top:204.5px;font-size:10px;font-weight:normal;color:#c9c9c9;letter-spacing:0px">Y:</div>
<div class="a" style="left:1167px;top:199px;width:40px;height:20px;background:#474747;border:1px solid #5a5a5a;border-radius:3px"></div>
<div class="t" style="left:1172px;top:204.5px;font-size:10px;font-weight:normal;color:#e8e8e8;letter-spacing:0px">71.26</div>
<svg class="a" style="left:1146px;top:226px" width="18" height="12" viewBox="0 0 18 12"><path d="M1 10.5 L9.5 1.5 L11.5 10.5 Z" fill="none" stroke="#c8c8c8" stroke-width="1.2" stroke-linejoin="round"/><circle cx="15" cy="5" r="0.8" fill="#c8c8c8"/><circle cx="15" cy="9" r="0.8" fill="#c8c8c8"/></svg>
<div class="a" style="left:1164px;top:226px;width:40px;height:19px;background:#474747;border:1px solid #5a5a5a;border-radius:3px"></div>
<div class="t" style="left:1168px;top:230.5px;font-size:10px;font-weight:normal;color:#e8e8e8;letter-spacing:0px">0°</div>
<div class="a" style="left:1110px;top:265px;width:84px;height:2px;background:#474747"></div>
<div class="t" style="left:1121px;top:279.5px;font-size:10px;font-weight:normal;color:#c9c9c9;letter-spacing:-0.23px">Appearance</div>
<div class="a" style="left:1122px;top:303px;width:17px;height:17px;background:#5779ff;border:1px solid #fff;outline:1px solid #2a2a2a"></div>
<div class="t" style="left:1150px;top:308.5px;font-size:10px;font-weight:normal;color:#c9c9c9;letter-spacing:0px">Fill</div>
<div class="t" style="left:1151px;top:337.5px;font-size:10px;font-weight:bold;color:#dcdcdc;letter-spacing:-0.52px">Stroke</div>
<div class="a" style="left:1151px;top:348px;width:30px;height:1px;border-bottom:1px dotted #bbb"></div>
<div class="t" style="left:1151px;top:366.5px;font-size:10px;font-weight:bold;color:#dcdcdc;letter-spacing:-0.53px">Opacity</div>
<div class="a" style="left:1151px;top:377px;width:34px;height:1px;border-bottom:1px dotted #bbb"></div>
<div class="a" style="left:1110px;top:435px;width:84px;height:2px;background:#474747"></div>
<svg class="a" style="left:1137px;top:406px" width="6" height="4" viewBox="0 0 6 4"><path d="M0 0 H6 L3 4Z" fill="#c8c8c8"/></svg>
<div class="t" style="left:1121px;top:456.5px;font-size:10px;font-weight:normal;color:#c9c9c9;letter-spacing:0px">Quick Actions</div>
<div class="a" style="left:1121px;top:479px;width:80px;height:20px;border:1px solid #6a6a6a;border-radius:3px"></div>
<div class="t" style="left:1151px;top:484.5px;font-size:10px;font-weight:bold;color:#e8e8e8;letter-spacing:0px">Offset Path</div>
<div class="a" style="left:1121px;top:509px;width:80px;height:20px;border:1px solid #6a6a6a;border-radius:3px"></div>
<div class="a" style="left:1121px;top:542px;width:80px;height:20px;border:1px solid #6a6a6a;border-radius:3px"></div>
<div class="t" style="left:1156px;top:546.5px;font-size:10px;font-weight:bold;color:#e8e8e8;letter-spacing:0px">Ungroup</div>
<div class="a" style="left:1121px;top:572px;width:80px;height:20px;border:1px solid #6a6a6a;border-radius:3px"></div>
<div class="t" style="left:1188px;top:577.5px;font-size:10px;font-weight:bold;color:#e8e8e8;letter-spacing:0px">S</div>


<!-- ============ LAYERS PANEL ============ -->
<div class="a" style="left:718px;top:121px;width:268px;height:365px;background:#535353;"></div>
<div class="a" style="left:718px;top:121px;width:268px;height:4px;background:#333"></div>
<div class="a" style="left:718px;top:125px;width:268px;height:26px;background:#424242"></div>
<div class="a" style="left:718px;top:125px;width:48px;height:26px;background:#535353"></div>
<div class="t" style="left:728px;top:133.5px;font-size:10px;color:#f0f0f0;letter-spacing:-0.25px">Layers</div>
<svg class="a" style="left:945px;top:133px" width="36" height="11" viewBox="0 0 36 11"><path d="M1 1.5 L5 5.5 L1 9.5 M6 1.5 L10 5.5 L6 9.5" fill="none" stroke="#c8c8c8" stroke-width="1.2"/><path d="M17.5 0 V11" stroke="#c8c8c8" stroke-width="1"/><path d="M25 2 H35 M25 5.5 H35 M25 9 H35" stroke="#c8c8c8" stroke-width="1.2"/></svg>
<div class="a" style="left:724px;top:158px;width:245px;height:299px;border:1px solid #4a4a4a;border-right:none;overflow:hidden">
<div class="a" style="left:0;top:0px;width:245px;height:21px;background:transparent;border-bottom:1px solid #4a4a4a"><svg class="a" style="left:3px;top:5px" width="14" height="10" viewBox="0 0 14 10"><path d="M0.4 5 C2.2 1.3 4.8 0.7 7 0.7 C9.2 0.7 11.8 1.3 13.6 5 C11.8 8.7 9.2 9.3 7 9.3 C4.8 9.3 2.2 8.7 0.4 5Z" fill="#c8c8c8"/><circle cx="7" cy="5" r="2.7" fill="#555"/><circle cx="7.3" cy="5" r="1.1" fill="#c8c8c8"/></svg><div class="a" style="left:20px;top:0;width:1px;height:21px;background:#4a4a4a"></div><div class="a" style="left:41px;top:0;width:1px;height:21px;background:#4a4a4a"></div><div class="a" style="left:43px;top:1px;width:3px;height:19px;background:#4f7bff"></div><div class="a" style="left:47px;top:0;width:1px;height:21px;background:#4a4a4a"></div><div class="a" style="left:208px;top:0;width:1px;height:21px;background:#4a4a4a"></div><svg class="a" style="left:55.5px;top:6.5px" width="9" height="6" viewBox="0 0 9 6"><path d="M0.8 1 L4.5 4.7 L8.2 1" fill="none" stroke="#e8e8e8" stroke-width="1.9"/></svg><div class="a" style="left:72px;top:1px;width:18px;height:18px;background:#fff;border:1.5px solid #111;overflow:hidden"><div class="a" style="left:3px;top:1px;width:9px;height:13px;background:#5779ff"></div><div class="a" style="left:10px;top:1px;width:2px;height:8px;background:#ff9ccf"></div><div class="a" style="left:3px;top:10px;width:5px;height:4px;background:#ffa62b"></div><div class="a" style="left:8px;top:9px;width:4px;height:5px;background:#ffda44"></div><div class="a" style="left:5px;top:5px;width:5px;height:3px;background:#e6eaee;border-radius:2px"></div></div><div class="t" style="left:95px;top:5.5px;font-size:10px;color:#dcdcdc;letter-spacing:-0.14px">Layer 1</div><svg class="a" style="left:212px;top:4px" width="12" height="12" viewBox="0 0 12 12"><circle cx="6" cy="6" r="4.5" fill="none" stroke="#c8c8c8" stroke-width="1.1"/></svg><div class="a" style="left:228px;top:6px;width:7px;height:7px;background:#4f7bff;border:1px solid #111"></div></div>
<div class="a" style="left:0;top:21px;width:245px;height:21px;background:transparent;border-bottom:1px solid #4a4a4a"><svg class="a" style="left:3px;top:5px" width="14" height="10" viewBox="0 0 14 10"><path d="M0.4 5 C2.2 1.3 4.8 0.7 7 0.7 C9.2 0.7 11.8 1.3 13.6 5 C11.8 8.7 9.2 9.3 7 9.3 C4.8 9.3 2.2 8.7 0.4 5Z" fill="#c8c8c8"/><circle cx="7" cy="5" r="2.7" fill="#555"/><circle cx="7.3" cy="5" r="1.1" fill="#c8c8c8"/></svg><div class="a" style="left:20px;top:0;width:1px;height:21px;background:#4a4a4a"></div><div class="a" style="left:41px;top:0;width:1px;height:21px;background:#4a4a4a"></div><div class="a" style="left:43px;top:1px;width:3px;height:19px;background:#4f7bff"></div><div class="a" style="left:47px;top:0;width:1px;height:21px;background:#4a4a4a"></div><div class="a" style="left:208px;top:0;width:1px;height:21px;background:#4a4a4a"></div><div class="a" style="left:95px;top:1px;width:18px;height:18px;background:#fff;border:1.5px solid #111;overflow:hidden"><svg class="a" style="left:1px;top:3px" width="13" height="8" viewBox="0 0 13 8"><path d="M1 7 C0 5 2 4 3 4 C2 2 4 1 6 1.5 C7 0 10 0 10.5 2 C12 1.5 13 3 12 4 C13 6 11 7 9 6.5 C8 8 5 8 4 7 C3 8 1 8 1 7Z" fill="#e3e7eb"/></svg></div><div class="t" style="left:119px;top:5.5px;font-size:10px;color:#dcdcdc;letter-spacing:0px">&lt;Path&gt;</div><svg class="a" style="left:212px;top:4px" width="12" height="12" viewBox="0 0 12 12"><circle cx="6" cy="6" r="4.5" fill="none" stroke="#c8c8c8" stroke-width="1.1"/></svg></div>
<div class="a" style="left:0;top:42px;width:245px;height:21px;background:#4a5d73;border-bottom:1px solid #4a4a4a"><svg class="a" style="left:3px;top:5px" width="14" height="10" viewBox="0 0 14 10"><path d="M0.4 5 C2.2 1.3 4.8 0.7 7 0.7 C9.2 0.7 11.8 1.3 13.6 5 C11.8 8.7 9.2 9.3 7 9.3 C4.8 9.3 2.2 8.7 0.4 5Z" fill="#c8c8c8"/><circle cx="7" cy="5" r="2.7" fill="#555"/><circle cx="7.3" cy="5" r="1.1" fill="#c8c8c8"/></svg><div class="a" style="left:20px;top:0;width:1px;height:21px;background:#4a4a4a"></div><div class="a" style="left:41px;top:0;width:1px;height:21px;background:#4a4a4a"></div><div class="a" style="left:43px;top:1px;width:3px;height:19px;background:#4f7bff"></div><div class="a" style="left:47px;top:0;width:1px;height:21px;background:#4a4a4a"></div><div class="a" style="left:208px;top:0;width:1px;height:21px;background:#4a4a4a"></div><svg class="a" style="left:78px;top:6px" width="6" height="9" viewBox="0 0 6 9"><path d="M1 0.8 L4.7 4.5 L1 8.2" fill="none" stroke="#e8e8e8" stroke-width="1.9"/></svg><div class="a" style="left:95px;top:1px;width:18px;height:18px;background:#fff;border:1.5px solid #111;overflow:hidden"><div class="a" style="left:0;top:0;width:15px;height:15px;background:#ffda44;clip-path:polygon(15% 100%,15% 75%,70% 0,70% 100%)"></div></div><div class="t" style="left:119px;top:5.5px;font-size:10px;color:#dcdcdc;letter-spacing:0px">&lt;Group&gt;</div><svg class="a" style="left:212px;top:4px" width="12" height="12" viewBox="0 0 12 12"><circle cx="6" cy="6" r="4.5" fill="none" stroke="#c8c8c8" stroke-width="1.1"/></svg></div>
<div class="a" style="left:0;top:63px;width:245px;height:21px;background:transparent;border-bottom:1px solid #4a4a4a"><svg class="a" style="left:3px;top:5px" width="14" height="10" viewBox="0 0 14 10"><path d="M0.4 5 C2.2 1.3 4.8 0.7 7 0.7 C9.2 0.7 11.8 1.3 13.6 5 C11.8 8.7 9.2 9.3 7 9.3 C4.8 9.3 2.2 8.7 0.4 5Z" fill="#c8c8c8"/><circle cx="7" cy="5" r="2.7" fill="#555"/><circle cx="7.3" cy="5" r="1.1" fill="#c8c8c8"/></svg><div class="a" style="left:20px;top:0;width:1px;height:21px;background:#4a4a4a"></div><div class="a" style="left:41px;top:0;width:1px;height:21px;background:#4a4a4a"></div><div class="a" style="left:43px;top:1px;width:3px;height:19px;background:#4f7bff"></div><div class="a" style="left:47px;top:0;width:1px;height:21px;background:#4a4a4a"></div><div class="a" style="left:208px;top:0;width:1px;height:21px;background:#4a4a4a"></div><div class="a" style="left:95px;top:1px;width:18px;height:18px;background:#fff;border:1.5px solid #111;overflow:hidden"><div class="a" style="left:7px;top:0;width:2px;height:15px;background:#ff9ccf"></div></div><div class="t" style="left:119px;top:5.5px;font-size:10px;color:#dcdcdc;letter-spacing:0px">&lt;Path&gt;</div><svg class="a" style="left:212px;top:4px" width="12" height="12" viewBox="0 0 12 12"><circle cx="6" cy="6" r="4.5" fill="none" stroke="#c8c8c8" stroke-width="1.1"/></svg></div>
<div class="a" style="left:0;top:84px;width:245px;height:21px;background:transparent;border-bottom:1px solid #4a4a4a"><svg class="a" style="left:3px;top:5px" width="14" height="10" viewBox="0 0 14 10"><path d="M0.4 5 C2.2 1.3 4.8 0.7 7 0.7 C9.2 0.7 11.8 1.3 13.6 5 C11.8 8.7 9.2 9.3 7 9.3 C4.8 9.3 2.2 8.7 0.4 5Z" fill="#c8c8c8"/><circle cx="7" cy="5" r="2.7" fill="#555"/><circle cx="7.3" cy="5" r="1.1" fill="#c8c8c8"/></svg><div class="a" style="left:20px;top:0;width:1px;height:21px;background:#4a4a4a"></div><div class="a" style="left:41px;top:0;width:1px;height:21px;background:#4a4a4a"></div><div class="a" style="left:43px;top:1px;width:3px;height:19px;background:#4f7bff"></div><div class="a" style="left:47px;top:0;width:1px;height:21px;background:#4a4a4a"></div><div class="a" style="left:208px;top:0;width:1px;height:21px;background:#4a4a4a"></div><svg class="a" style="left:78.5px;top:6.5px" width="9" height="6" viewBox="0 0 9 6"><path d="M0.8 1 L4.5 4.7 L8.2 1" fill="none" stroke="#e8e8e8" stroke-width="1.9"/></svg><div class="a" style="left:95px;top:1px;width:18px;height:18px;background:#fff;border:1.5px solid #111;overflow:hidden"><div class="a" style="left:1px;top:0;width:14px;height:15px;background:#5779ff;clip-path:polygon(0 0,100% 0,100% 65%,60% 100%,0 100%)"></div></div><div class="t" style="left:119px;top:5.5px;font-size:10px;color:#dcdcdc;letter-spacing:0px">&lt;Group&gt;</div><svg class="a" style="left:211px;top:3px" width="15" height="15" viewBox="0 0 15 15"><circle cx="7.5" cy="7.5" r="6" fill="none" stroke="#c8c8c8" stroke-width="1.1"/><circle cx="7.5" cy="7.5" r="3.8" fill="none" stroke="#c8c8c8" stroke-width="1.1"/></svg><div class="a" style="left:228px;top:6px;width:7px;height:7px;background:#4f7bff;border:1px solid #111"></div></div>
<div class="a" style="left:0;top:105px;width:245px;height:21px;background:transparent;border-bottom:1px solid #4a4a4a"><svg class="a" style="left:3px;top:5px" width="14" height="10" viewBox="0 0 14 10"><path d="M0.4 5 C2.2 1.3 4.8 0.7 7 0.7 C9.2 0.7 11.8 1.3 13.6 5 C11.8 8.7 9.2 9.3 7 9.3 C4.8 9.3 2.2 8.7 0.4 5Z" fill="#c8c8c8"/><circle cx="7" cy="5" r="2.7" fill="#555"/><circle cx="7.3" cy="5" r="1.1" fill="#c8c8c8"/></svg><div class="a" style="left:20px;top:0;width:1px;height:21px;background:#4a4a4a"></div><div class="a" style="left:41px;top:0;width:1px;height:21px;background:#4a4a4a"></div><div class="a" style="left:43px;top:1px;width:3px;height:19px;background:#4f7bff"></div><div class="a" style="left:47px;top:0;width:1px;height:21px;background:#4a4a4a"></div><div class="a" style="left:208px;top:0;width:1px;height:21px;background:#4a4a4a"></div><div class="a" style="left:118px;top:1px;width:18px;height:18px;background:#fff;border:1.5px solid #111;overflow:hidden"><div class="a" style="left:1px;top:0;width:14px;height:15px;background:#5779ff;clip-path:polygon(0 0,100% 0,100% 65%,60% 100%,0 100%)"></div></div><div class="t" style="left:142px;top:5.5px;font-size:10px;color:#dcdcdc;letter-spacing:0px">&lt;Path&gt;</div><svg class="a" style="left:212px;top:4px" width="12" height="12" viewBox="0 0 12 12"><circle cx="6" cy="6" r="4.5" fill="none" stroke="#c8c8c8" stroke-width="1.1"/></svg><div class="a" style="left:228px;top:6px;width:7px;height:7px;background:#4f7bff;border:1px solid #111"></div></div>
<div class="a" style="left:0;top:126px;width:245px;height:21px;background:transparent;border-bottom:1px solid #4a4a4a"><svg class="a" style="left:3px;top:5px" width="14" height="10" viewBox="0 0 14 10"><path d="M0.4 5 C2.2 1.3 4.8 0.7 7 0.7 C9.2 0.7 11.8 1.3 13.6 5 C11.8 8.7 9.2 9.3 7 9.3 C4.8 9.3 2.2 8.7 0.4 5Z" fill="#c8c8c8"/><circle cx="7" cy="5" r="2.7" fill="#555"/><circle cx="7.3" cy="5" r="1.1" fill="#c8c8c8"/></svg><div class="a" style="left:20px;top:0;width:1px;height:21px;background:#4a4a4a"></div><div class="a" style="left:41px;top:0;width:1px;height:21px;background:#4a4a4a"></div><div class="a" style="left:43px;top:1px;width:3px;height:19px;background:#4f7bff"></div><div class="a" style="left:47px;top:0;width:1px;height:21px;background:#4a4a4a"></div><div class="a" style="left:208px;top:0;width:1px;height:21px;background:#4a4a4a"></div><div class="a" style="left:95px;top:1px;width:18px;height:18px;background:#fff;border:1.5px solid #111;overflow:hidden"><div class="a" style="left:4px;top:0;width:8px;height:15px;background:#c44d10"></div></div><div class="t" style="left:119px;top:5.5px;font-size:10px;color:#dcdcdc;letter-spacing:0px">&lt;Path&gt;</div><svg class="a" style="left:212px;top:4px" width="12" height="12" viewBox="0 0 12 12"><circle cx="6" cy="6" r="4.5" fill="none" stroke="#c8c8c8" stroke-width="1.1"/></svg></div>
<div class="a" style="left:0;top:147px;width:245px;height:21px;background:transparent;border-bottom:1px solid #4a4a4a"><svg class="a" style="left:3px;top:5px" width="14" height="10" viewBox="0 0 14 10"><path d="M0.4 5 C2.2 1.3 4.8 0.7 7 0.7 C9.2 0.7 11.8 1.3 13.6 5 C11.8 8.7 9.2 9.3 7 9.3 C4.8 9.3 2.2 8.7 0.4 5Z" fill="#c8c8c8"/><circle cx="7" cy="5" r="2.7" fill="#555"/><circle cx="7.3" cy="5" r="1.1" fill="#c8c8c8"/></svg><div class="a" style="left:20px;top:0;width:1px;height:21px;background:#4a4a4a"></div><div class="a" style="left:41px;top:0;width:1px;height:21px;background:#4a4a4a"></div><div class="a" style="left:43px;top:1px;width:3px;height:19px;background:#4f7bff"></div><div class="a" style="left:47px;top:0;width:1px;height:21px;background:#4a4a4a"></div><div class="a" style="left:208px;top:0;width:1px;height:21px;background:#4a4a4a"></div><svg class="a" style="left:78.5px;top:6.5px" width="9" height="6" viewBox="0 0 9 6"><path d="M0.8 1 L4.5 4.7 L8.2 1" fill="none" stroke="#e8e8e8" stroke-width="1.9"/></svg><div class="a" style="left:95px;top:1px;width:18px;height:18px;background:#fff;border:1.5px solid #111;overflow:hidden"><div class="a" style="left:0;top:2px;width:15px;height:13px;background:#ffa62b;clip-path:polygon(0 0,100% 30%,100% 100%,0 100%)"></div></div><div class="t" style="left:119px;top:5.5px;font-size:10px;color:#dcdcdc;letter-spacing:0px">&lt;Group&gt;</div><svg class="a" style="left:212px;top:4px" width="12" height="12" viewBox="0 0 12 12"><circle cx="6" cy="6" r="4.5" fill="none" stroke="#c8c8c8" stroke-width="1.1"/></svg></div>
<div class="a" style="left:0;top:168px;width:245px;height:21px;background:transparent;border-bottom:1px solid #4a4a4a"><svg class="a" style="left:3px;top:5px" width="14" height="10" viewBox="0 0 14 10"><path d="M0.4 5 C2.2 1.3 4.8 0.7 7 0.7 C9.2 0.7 11.8 1.3 13.6 5 C11.8 8.7 9.2 9.3 7 9.3 C4.8 9.3 2.2 8.7 0.4 5Z" fill="#c8c8c8"/><circle cx="7" cy="5" r="2.7" fill="#555"/><circle cx="7.3" cy="5" r="1.1" fill="#c8c8c8"/></svg><div class="a" style="left:20px;top:0;width:1px;height:21px;background:#4a4a4a"></div><div class="a" style="left:41px;top:0;width:1px;height:21px;background:#4a4a4a"></div><div class="a" style="left:43px;top:1px;width:3px;height:19px;background:#4f7bff"></div><div class="a" style="left:47px;top:0;width:1px;height:21px;background:#4a4a4a"></div><div class="a" style="left:208px;top:0;width:1px;height:21px;background:#4a4a4a"></div><div class="a" style="left:118px;top:1px;width:18px;height:18px;background:#fff;border:1.5px solid #111;overflow:hidden"><div class="a" style="left:0;top:2px;width:15px;height:13px;background:#ffa62b;clip-path:polygon(0 0,100% 30%,100% 100%,0 100%)"></div></div><div class="t" style="left:142px;top:5.5px;font-size:10px;color:#dcdcdc;letter-spacing:0px">&lt;Path&gt;</div><svg class="a" style="left:212px;top:4px" width="12" height="12" viewBox="0 0 12 12"><circle cx="6" cy="6" r="4.5" fill="none" stroke="#c8c8c8" stroke-width="1.1"/></svg></div>
<div class="a" style="left:0;top:189px;width:245px;height:21px;background:transparent;border-bottom:1px solid #4a4a4a"><svg class="a" style="left:3px;top:5px" width="14" height="10" viewBox="0 0 14 10"><path d="M0.4 5 C2.2 1.3 4.8 0.7 7 0.7 C9.2 0.7 11.8 1.3 13.6 5 C11.8 8.7 9.2 9.3 7 9.3 C4.8 9.3 2.2 8.7 0.4 5Z" fill="#c8c8c8"/><circle cx="7" cy="5" r="2.7" fill="#555"/><circle cx="7.3" cy="5" r="1.1" fill="#c8c8c8"/></svg><div class="a" style="left:20px;top:0;width:1px;height:21px;background:#4a4a4a"></div><div class="a" style="left:41px;top:0;width:1px;height:21px;background:#4a4a4a"></div><div class="a" style="left:43px;top:1px;width:3px;height:19px;background:#4f7bff"></div><div class="a" style="left:47px;top:0;width:1px;height:21px;background:#4a4a4a"></div><div class="a" style="left:208px;top:0;width:1px;height:21px;background:#4a4a4a"></div><div class="a" style="left:95px;top:1px;width:18px;height:18px;background:#fff;border:1.5px solid #111;overflow:hidden"><div class="a" style="left:0;top:2px;width:15px;height:12px;background:#8a3a0a"></div></div><div class="t" style="left:119px;top:5.5px;font-size:10px;color:#dcdcdc;letter-spacing:0px">&lt;Path&gt;</div><svg class="a" style="left:212px;top:4px" width="12" height="12" viewBox="0 0 12 12"><circle cx="6" cy="6" r="4.5" fill="none" stroke="#c8c8c8" stroke-width="1.1"/></svg></div>
<div class="a" style="left:0;top:210px;width:245px;height:21px;background:transparent;border-bottom:1px solid #4a4a4a"><svg class="a" style="left:3px;top:5px" width="14" height="10" viewBox="0 0 14 10"><path d="M0.4 5 C2.2 1.3 4.8 0.7 7 0.7 C9.2 0.7 11.8 1.3 13.6 5 C11.8 8.7 9.2 9.3 7 9.3 C4.8 9.3 2.2 8.7 0.4 5Z" fill="#c8c8c8"/><circle cx="7" cy="5" r="2.7" fill="#555"/><circle cx="7.3" cy="5" r="1.1" fill="#c8c8c8"/></svg><div class="a" style="left:20px;top:0;width:1px;height:21px;background:#4a4a4a"></div><div class="a" style="left:41px;top:0;width:1px;height:21px;background:#4a4a4a"></div><div class="a" style="left:43px;top:1px;width:3px;height:19px;background:#4f7bff"></div><div class="a" style="left:47px;top:0;width:1px;height:21px;background:#4a4a4a"></div><div class="a" style="left:208px;top:0;width:1px;height:21px;background:#4a4a4a"></div><div class="a" style="left:95px;top:1px;width:18px;height:18px;background:#fff;border:1.5px solid #111;overflow:hidden"></div><div class="t" style="left:119px;top:5.5px;font-size:10px;color:#dcdcdc;letter-spacing:0px">&lt;Path&gt;</div><svg class="a" style="left:212px;top:4px" width="12" height="12" viewBox="0 0 12 12"><circle cx="6" cy="6" r="4.5" fill="none" stroke="#c8c8c8" stroke-width="1.1"/></svg></div>
<div class="a" style="left:0;top:231px;width:245px;height:21px;background:transparent;border-bottom:1px solid #4a4a4a"><svg class="a" style="left:3px;top:5px" width="14" height="10" viewBox="0 0 14 10"><path d="M0.4 5 C2.2 1.3 4.8 0.7 7 0.7 C9.2 0.7 11.8 1.3 13.6 5 C11.8 8.7 9.2 9.3 7 9.3 C4.8 9.3 2.2 8.7 0.4 5Z" fill="#c8c8c8"/><circle cx="7" cy="5" r="2.7" fill="#555"/><circle cx="7.3" cy="5" r="1.1" fill="#c8c8c8"/></svg><div class="a" style="left:20px;top:0;width:1px;height:21px;background:#4a4a4a"></div><div class="a" style="left:41px;top:0;width:1px;height:21px;background:#4a4a4a"></div><div class="a" style="left:43px;top:1px;width:3px;height:19px;background:#4f7bff"></div><div class="a" style="left:47px;top:0;width:1px;height:21px;background:#4a4a4a"></div><div class="a" style="left:208px;top:0;width:1px;height:21px;background:#4a4a4a"></div><div class="a" style="left:95px;top:1px;width:18px;height:18px;background:#fff;border:1.5px solid #111;overflow:hidden"></div><div class="t" style="left:119px;top:5.5px;font-size:10px;color:#dcdcdc;letter-spacing:0px">&lt;Path&gt;</div><svg class="a" style="left:212px;top:4px" width="12" height="12" viewBox="0 0 12 12"><circle cx="6" cy="6" r="4.5" fill="none" stroke="#c8c8c8" stroke-width="1.1"/></svg></div>
<div class="a" style="left:0;top:252px;width:245px;height:21px;background:transparent;border-bottom:1px solid #4a4a4a"><svg class="a" style="left:3px;top:5px" width="14" height="10" viewBox="0 0 14 10"><path d="M0.4 5 C2.2 1.3 4.8 0.7 7 0.7 C9.2 0.7 11.8 1.3 13.6 5 C11.8 8.7 9.2 9.3 7 9.3 C4.8 9.3 2.2 8.7 0.4 5Z" fill="#c8c8c8"/><circle cx="7" cy="5" r="2.7" fill="#555"/><circle cx="7.3" cy="5" r="1.1" fill="#c8c8c8"/></svg><div class="a" style="left:20px;top:0;width:1px;height:21px;background:#4a4a4a"></div><div class="a" style="left:41px;top:0;width:1px;height:21px;background:#4a4a4a"></div><div class="a" style="left:43px;top:1px;width:3px;height:19px;background:#4f7bff"></div><div class="a" style="left:47px;top:0;width:1px;height:21px;background:#4a4a4a"></div><div class="a" style="left:208px;top:0;width:1px;height:21px;background:#4a4a4a"></div><div class="a" style="left:95px;top:1px;width:18px;height:18px;background:#fff;border:1.5px solid #111;overflow:hidden"></div><div class="t" style="left:119px;top:5.5px;font-size:10px;color:#dcdcdc;letter-spacing:0px">&lt;Path&gt;</div><svg class="a" style="left:212px;top:4px" width="12" height="12" viewBox="0 0 12 12"><circle cx="6" cy="6" r="4.5" fill="none" stroke="#c8c8c8" stroke-width="1.1"/></svg></div>
<div class="a" style="left:0;top:273px;width:245px;height:21px;background:transparent;border-bottom:1px solid #4a4a4a"><svg class="a" style="left:3px;top:5px" width="14" height="10" viewBox="0 0 14 10"><path d="M0.4 5 C2.2 1.3 4.8 0.7 7 0.7 C9.2 0.7 11.8 1.3 13.6 5 C11.8 8.7 9.2 9.3 7 9.3 C4.8 9.3 2.2 8.7 0.4 5Z" fill="#c8c8c8"/><circle cx="7" cy="5" r="2.7" fill="#555"/><circle cx="7.3" cy="5" r="1.1" fill="#c8c8c8"/></svg><div class="a" style="left:20px;top:0;width:1px;height:21px;background:#4a4a4a"></div><div class="a" style="left:41px;top:0;width:1px;height:21px;background:#4a4a4a"></div><div class="a" style="left:43px;top:1px;width:3px;height:19px;background:#4f7bff"></div><div class="a" style="left:47px;top:0;width:1px;height:21px;background:#4a4a4a"></div><div class="a" style="left:208px;top:0;width:1px;height:21px;background:#4a4a4a"></div><div class="a" style="left:95px;top:1px;width:18px;height:18px;background:#fff;border:1.5px solid #111;overflow:hidden"><div class="a" style="left:1px;top:0;width:11px;height:15px;background:#7089d0"></div></div><div class="t" style="left:119px;top:5.5px;font-size:10px;color:#dcdcdc;letter-spacing:0px">&lt;Path&gt;</div><svg class="a" style="left:212px;top:4px" width="12" height="12" viewBox="0 0 12 12"><circle cx="6" cy="6" r="4.5" fill="none" stroke="#c8c8c8" stroke-width="1.1"/></svg></div>
<div class="a" style="left:0;top:294px;width:245px;height:21px;background:transparent;border-bottom:1px solid #4a4a4a"><svg class="a" style="left:3px;top:5px" width="14" height="10" viewBox="0 0 14 10"><path d="M0.4 5 C2.2 1.3 4.8 0.7 7 0.7 C9.2 0.7 11.8 1.3 13.6 5 C11.8 8.7 9.2 9.3 7 9.3 C4.8 9.3 2.2 8.7 0.4 5Z" fill="#c8c8c8"/><circle cx="7" cy="5" r="2.7" fill="#555"/><circle cx="7.3" cy="5" r="1.1" fill="#c8c8c8"/></svg><div class="a" style="left:20px;top:0;width:1px;height:21px;background:#4a4a4a"></div><div class="a" style="left:41px;top:0;width:1px;height:21px;background:#4a4a4a"></div><div class="a" style="left:43px;top:1px;width:3px;height:19px;background:#4f7bff"></div><div class="a" style="left:47px;top:0;width:1px;height:21px;background:#4a4a4a"></div><div class="a" style="left:208px;top:0;width:1px;height:21px;background:#4a4a4a"></div><div class="a" style="left:95px;top:1px;width:18px;height:18px;background:#fff;border:1.5px solid #111;overflow:hidden"><div class="a" style="left:6px;top:1px;width:2px;height:4px;background:#5fc8e8"></div></div><div class="t" style="left:119px;top:5.5px;font-size:10px;color:#dcdcdc;letter-spacing:0px">&lt;Path&gt;</div><svg class="a" style="left:212px;top:4px" width="12" height="12" viewBox="0 0 12 12"><circle cx="6" cy="6" r="4.5" fill="none" stroke="#c8c8c8" stroke-width="1.1"/></svg></div>
</div>
<div class="a" style="left:959px;top:158px;width:8px;height:8px;background:linear-gradient(to bottom left,#d8d8d8 50%,transparent 50%)"></div>
<div class="a" style="left:968px;top:158px;width:12px;height:299px;background:#535353;border-left:1px solid #4a4a4a"></div>
<svg class="a" style="left:970px;top:163px" width="9" height="6" viewBox="0 0 9 6"><path d="M0.8 5 L4.5 1.3 L8.2 5" fill="none" stroke="#aaa" stroke-width="1.3"/></svg>
<div class="a" style="left:969px;top:171px;width:10px;height:286px;background:#5c5c5c;border-radius:5px"></div>
<div class="a" style="left:718px;top:457px;width:268px;height:20px;background:#535353"></div>
<div class="t" style="left:725px;top:463.5px;font-size:10px;color:#c9c9c9;letter-spacing:-0.17px">1 Layer</div>
<svg class="a" style="left:816px;top:460px" width="90" height="14" viewBox="0 0 90 14"><g fill="none" stroke="#c4c4c4" stroke-width="1.2"><path d="M6 3 H1.5 V12.5 H11 V8 M7 1 H12.5 V6.5 M12.5 1 L6 7.5"/><circle cx="32" cy="5.5" r="4.3"/><path d="M35 8.5 L39 12.5" stroke-width="1.8"/><rect x="53.5" y="1.5" width="7" height="7"/><rect x="56.5" y="4.5" width="7" height="7"/></g><rect x="57" y="5" width="3.5" height="3.5" fill="#c4c4c4"/><path d="M79 1 V7 H87 M85 5 L87 7 L85 9" fill="none" stroke="#888" stroke-width="1"/></svg>
<div class="a" style="left:718px;top:477px;width:268px;height:2px;background:#3c3c3c"></div>
<div class="a" style="left:850px;top:480px;width:19px;height:4px;background:repeating-linear-gradient(90deg,#2e2e2e 0 1px,transparent 1px 2px)"></div>
<div class="a" style="left:718px;top:484px;width:268px;height:2px;background:#3c3c3c"></div>

<!-- mini floating panel -->
<div class="a" style="left:988px;top:110px;width:38px;height:54px;background:#535353;border:1px solid #3c3c3c;border-radius:3px 3px 0 0"></div>
<div class="a" style="left:988px;top:110px;width:38px;height:13px;background:#424242;border-radius:3px 3px 0 0"></div>
<svg class="a" style="left:995px;top:113px" width="28" height="8" viewBox="0 0 28 8"><path d="M0.5 1 L3.5 4 L0.5 7 M4.5 1 L7.5 4 L4.5 7" fill="none" stroke="#d0d0d0" stroke-width="1.2"/><path d="M19 1 L25 7 M25 1 L19 7" stroke="#d0d0d0" stroke-width="1.8"/></svg>
<div class="a" style="left:997px;top:127px;width:19px;height:3px;background:repeating-linear-gradient(90deg,#2e2e2e 0 1px,transparent 1px 2px)"></div>
<div class="a" style="left:993px;top:135px;width:27px;height:23px;background:#3b3b3b;border:1px solid #4a4a4a;border-radius:3px"></div>
<svg class="a" style="left:997px;top:138px" width="19" height="17" viewBox="0 0 19 17"><path d="M9.5 0 L18.5 5 L9.5 10 L0.5 5Z" fill="#d0d0d0"/><path d="M2.5 8.5 L0.5 10 L9.5 15.5 L18.5 10 L16.5 8.5 L9.5 12.5Z" fill="#d0d0d0"/></svg>


<!-- ============ COLOR PANEL ============ -->
<div class="a" style="left:899px;top:320px;width:240px;height:237px;background:#535353;border:1px solid #4a4a4a;box-shadow:0 1px 3px rgba(0,0,0,0.25)"></div>
<svg class="a" style="left:1121px;top:324px" width="13" height="9" viewBox="0 0 13 9"><g fill="#d0d0d0"><rect x="0" y="0" width="2" height="1.5"/><rect x="3" y="0" width="10" height="1.5"/><rect x="0" y="3.5" width="2" height="1.5"/><rect x="3" y="3.5" width="10" height="1.5"/><rect x="0" y="7" width="2" height="1.5"/><rect x="3" y="7" width="10" height="1.5"/></g></svg>
<div class="a" style="left:906px;top:337px;width:29px;height:29px;background:#5779ff;border:1.5px solid #fff;outline:1px solid #222"></div>
<div class="a" style="left:992px;top:337px;width:59px;height:28px;border:1px solid #4a4a4a;border-radius:3px;background:#535353"></div>
<div class="a" style="left:1021px;top:337px;width:30px;height:28px;background:#2e2e2e;border-radius:0 3px 3px 0"></div>
<svg class="a" style="left:998px;top:344px" width="16" height="13" viewBox="0 0 16 13"><rect x="0.5" y="0.5" width="15" height="12" fill="none" stroke="#bbb" stroke-width="1"/><g fill="#999"><rect x="1.5" y="1.5" width="4" height="4.5"/><rect x="6" y="1.5" width="4" height="4.5" fill="#ccc"/><rect x="10.5" y="1.5" width="4" height="4.5"/><rect x="1.5" y="6.5" width="4" height="5"/><rect x="6" y="6.5" width="4" height="5"/><rect x="10.5" y="6.5" width="4" height="5"/></g></svg>
<svg class="a" style="left:1026px;top:342px" width="20" height="16" viewBox="0 0 20 16"><path d="M10 0.5 C17 0.5 19.5 4 19 7 C18.5 9.5 15 8.5 14 10.5 C13 12.5 15 15.5 10 15.5 C4 15.5 0.5 12 0.5 8 C0.5 3.5 4.5 0.5 10 0.5Z" fill="#fff"/><g fill="#2e2e2e"><circle cx="5" cy="10" r="1.5"/><circle cx="8" cy="13" r="1.5"/><circle cx="12" cy="13" r="1.3"/><circle cx="16" cy="5" r="1.3"/></g></svg>
<div class="t" style="left:952px;top:382.5px;font-size:10px;font-weight:bold;color:#c9c9c9;letter-spacing:0px">R</div>
<div class="t" style="left:952px;top:415.5px;font-size:10px;font-weight:bold;color:#c9c9c9;letter-spacing:0px">G</div>
<div class="t" style="left:952px;top:448.5px;font-size:10px;font-weight:bold;color:#c9c9c9;letter-spacing:0px">B</div>
<div class="a" style="left:971px;top:384px;width:101px;height:4px;background:linear-gradient(90deg,#0079ff,#ff79ff)"></div>
<div class="a" style="left:971px;top:417px;width:101px;height:4px;background:linear-gradient(90deg,#5700ff,#57ffff)"></div>
<div class="a" style="left:971px;top:450px;width:101px;height:4px;background:linear-gradient(90deg,#577900,#5779ff)"></div>
<svg class="a" style="left:1001px;top:389px" width="10" height="8" viewBox="0 0 10 8"><path d="M5 0 L9.5 4 V8 H0.5 V4Z" fill="#c8c8c8"/></svg>
<svg class="a" style="left:1014px;top:422px" width="10" height="8" viewBox="0 0 10 8"><path d="M5 0 L9.5 4 V8 H0.5 V4Z" fill="#c8c8c8"/></svg>
<svg class="a" style="left:1068px;top:455px" width="10" height="8" viewBox="0 0 10 8"><path d="M5 0 L9.5 4 V8 H0.5 V4Z" fill="#c8c8c8"/></svg>
<div class="a" style="left:1080px;top:377px;width:36px;height:20px;background:#464646;border:1px solid #5a5a5a;border-radius:3px"></div>
<div class="a" style="left:1080px;top:410px;width:36px;height:20px;background:#464646;border:1px solid #5a5a5a;border-radius:3px"></div>
<div class="a" style="left:1080px;top:443px;width:36px;height:20px;background:#464646;border:1px solid #5a5a5a;border-radius:3px"></div>
<div class="t" style="left:1084px;top:382.5px;font-size:10px;font-weight:normal;color:#e8e8e8;letter-spacing:0px">87</div>
<div class="t" style="left:1084px;top:415.5px;font-size:10px;font-weight:normal;color:#e8e8e8;letter-spacing:0px">121</div>
<div class="t" style="left:1084px;top:448.5px;font-size:10px;font-weight:normal;color:#e8e8e8;letter-spacing:0px">255</div>
<svg class="a" style="left:910px;top:407px" width="13" height="14" viewBox="0 0 13 14"><path d="M6.5 0.7 L12 3.5 V10.5 L6.5 13.3 L1 10.5 V3.5Z M1 3.5 L6.5 6.3 L12 3.5 M6.5 6.3 V13.3" fill="none" stroke="#aaa" stroke-width="1.1"/></svg>
<div class="a" style="left:929px;top:406px;width:15px;height:15px;background:#6a63ff;border:1px solid #fff;outline:1px solid #222"></div>
<svg class="a" style="left:909px;top:430px" width="15" height="14" viewBox="0 0 15 14"><path d="M7.5 0 L15 14 H0Z" fill="#c8c8c8"/><rect x="6.6" y="4.5" width="1.8" height="5" fill="#535353"/><rect x="6.6" y="10.5" width="1.8" height="1.8" fill="#535353"/></svg>
<div class="a" style="left:929px;top:430px;width:15px;height:15px;background:#5b72b8;border:1px solid #fff;outline:1px solid #222"></div>
<div class="a" style="left:905px;top:479px;width:40px;height:14px;border:1px solid #222;background:#fff;overflow:hidden">
 <div class="a" style="left:-2px;top:5px;width:16px;height:2px;background:#ff1010;transform:rotate(-45deg)"></div>
 <div class="a" style="left:13px;top:0;width:13px;height:14px;background:#000"></div>
</div>
<div class="t" style="left:1052px;top:482.5px;font-size:10px;font-weight:normal;color:#c9c9c9;letter-spacing:0px">#</div>
<div class="a" style="left:1062px;top:476px;width:60px;height:21px;background:#fff;border:1.5px solid #3f8ef5;border-radius:3px"></div>
<div class="a" style="left:1067px;top:480px;width:28px;height:13px;background:#0a64d8"></div>
<div class="t" style="left:1067px;top:481.5px;font-size:10px;font-weight:normal;color:#fff;letter-spacing:-0.05px">5779ff</div>
<div class="a" style="left:906px;top:503px;width:215px;height:48px;border:1px solid #222;background:linear-gradient(to bottom,#fff 0%,rgba(255,255,255,0) 50%,rgba(0,0,0,0) 50%,#000 100%),linear-gradient(90deg,#f00,#ff0 17%,#0f0 33%,#0ff 50%,#00f 67%,#f0f 83%,#f00)"></div>
<div class="a" style="left:1124px;top:541px;width:10px;height:10px;background:radial-gradient(circle,#777 0.6px,transparent 0.8px) 0 0/3px 3px;clip-path:polygon(100% 0,100% 100%,0 100%)"></div>

<!-- ============ RED ANNOTATIONS ============ -->
<svg class="a" style="left:0;top:0" width="1194" height="698" viewBox="0 0 1194 698">
 <defs><filter id="sh" x="-5%" y="-5%" width="110%" height="110%"><feDropShadow dx="1" dy="1" stdDeviation="1" flood-color="#000" flood-opacity="0.25"/></filter></defs>
 <rect x="310.5" y="186" width="105.5%" height="0" fill="none"/>
 <rect x="310.5" y="186" width="306" height="447" fill="none" stroke="#ff0000" stroke-width="5" rx="1.5" filter="url(#sh)"/>
 <rect x="700" y="67" width="486.5" height="530" fill="none" stroke="#ff0000" stroke-width="5" rx="1.5" filter="url(#sh)"/>
 <path d="M85 95.5 L252 96.5" stroke="#ff0000" stroke-width="4.5" stroke-linecap="round"/>
 <g stroke="#d8101a" stroke-width="3.5" stroke-linecap="round" stroke-linejoin="round" fill="none" filter="url(#sh)">
  <path d="M259 106 L302.5 175.5"/>
  <path d="M293 172 L303 176 L301.5 166"/>
 </g>
 <g stroke="#d8101a" stroke-width="4" stroke-linecap="round" stroke-linejoin="round" fill="none" filter="url(#sh)">
  <path d="M837 524.3 L647 523.5"/>
  <path d="M654 517.5 L646 523.5 L654 529"/>
 </g>
</svg>

</body></html>
